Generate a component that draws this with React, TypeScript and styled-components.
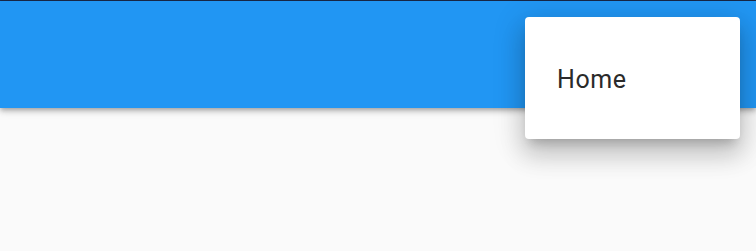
import React from "react";
import styled, { createGlobalStyle } from "styled-components";

const Global = createGlobalStyle`
  html, body { margin: 0; padding: 0; background: #fafafa; }
  body { font-family: Roboto, "Noto Sans", sans-serif; }
`;

const Page = styled.div`
  position: relative;
  width: 756px;
  height: 251px;
  background: #fafafa;
  overflow: hidden;
`;

const TopLine = styled.div`
  height: 1px;
  background: #1b2a4a;
`;

const AppBar = styled.header`
  height: 107px;
  background: #2196f3;
  box-shadow: 0 2px 4px -1px rgba(0,0,0,0.2), 0 4px 5px 0 rgba(0,0,0,0.14), 0 1px 10px 0 rgba(0,0,0,0.12);
`;

const Menu = styled.div`
  position: absolute;
  left: 525px;
  top: 17px;
  width: 215px;
  height: 122px;
  background: #fff;
  border-radius: 4px;
  box-shadow: 0 8px 10px -5px rgba(0,0,0,0.2), 0 16px 24px 2px rgba(0,0,0,0.14), 0 6px 30px 5px rgba(0,0,0,0.12);
  display: flex;
  flex-direction: column;
  justify-content: center;
`;

const MenuItem = styled.div`
  padding: 4px 32px 0;
  font-size: 25px;
  line-height: 48px;
  color: #2a2a2a;
  letter-spacing: 0.6px;
`;

export default function App() {
  return (
    <Page>
      <Global />
      <TopLine />
      <AppBar />
      <Menu>
        <MenuItem>Home</MenuItem>
      </Menu>
    </Page>
  );
}
